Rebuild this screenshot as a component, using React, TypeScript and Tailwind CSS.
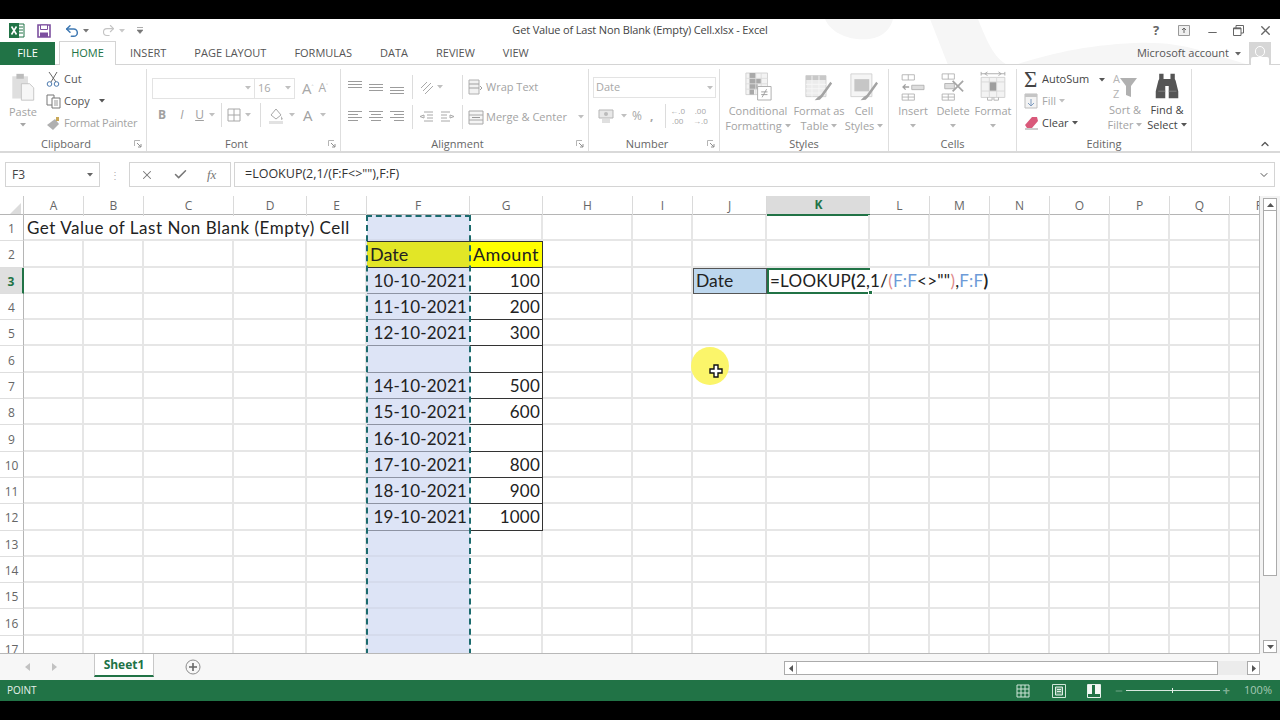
import React from "react";
import { ChevronDown, Undo2, Redo2, X, Check, Minus, ChevronUp } from "lucide-react";

const ui = "font-['Open_Sans','Noto_Sans',sans-serif]";
const cellFont = "font-['Lato','Carlito',sans-serif]";
const cols = ["A","B","C","D","E","F","G","H","I","J","K","L","M","N","O","P","Q","R"];

function Caret({ c = "#a6a6a6", className = "" }: { c?: string; className?: string }) {
  return <svg width="6" height="4" viewBox="0 0 6 4" className={className}><path d="M0 0h6L3 3.5z" fill={c} /></svg>;
}
function Lines({ kind, c = "#9c9c9c" }: { kind: "l" | "c" | "r" | "t" | "m" | "b"; c?: string }) {
  const y = kind === "t" ? [2, 5, 8] : kind === "m" ? [5, 8, 11] : kind === "b" ? [8, 11, 14] : [2, 5, 8, 11];
  return (
    <svg width="16" height="16" viewBox="0 0 16 16">
      {y.map((v, i) => {
        const short = i % 2 === 1 && kind.length === 1 && "lcr".includes(kind);
        const x1 = kind === "r" && short ? 5 : kind === "c" && short ? 3 : 1;
        const x2 = kind === "l" && short ? 11 : kind === "c" && short ? 13 : 15;
        return <path key={i} d={`M${x1} ${v + 0.5}H${x2}`} stroke={c} />;
      })}
    </svg>
  );
}
function Sep({ h = "h-[24px]" }: { h?: string }) {
  return <div className={`w-px ${h} bg-[#dcdcdc] shrink-0`} />;
}
function Launcher() {
  return (
    <svg width="8" height="8" viewBox="0 0 8 8" className="absolute right-[4px] bottom-[3px]">
      <path d="M0.5 6V0.5H6" fill="none" stroke="#b5b5b5" /><path d="M3 3l4 4M7 4v3H4" fill="none" stroke="#8f8f8f" />
    </svg>
  );
}
function Group({ w, label, launcher, children }: { w: string; label: string; launcher?: boolean; children: React.ReactNode }) {
  return (
    <div className={`${w} shrink-0 border-r border-[#dedede] flex flex-col relative mt-[4px] h-[82px]`}>
      <div className="flex-1 min-h-0">{children}</div>
      <div className={`h-[14px] text-center text-[11px] leading-[14px] text-[#666] ${launcher ? "pr-[14px]" : ""}`}>{label}</div>
      {launcher && <Launcher />}
    </div>
  );
}
function BigButton({ w, l1, l2, dark, children }: { w: string; l1: string; l2?: string; dark?: boolean; children: React.ReactNode }) {
  const c = dark ? "text-[#444]" : "text-[#a3a3a3]";
  return (
    <div className={`${w} shrink-0 flex flex-col items-center`}>
      <div className="h-[33px] flex items-center justify-center">{children}</div>
      <div className={`text-[11px] leading-[15px] whitespace-nowrap ${c}`}>{l1}</div>
      <div className={`text-[11px] leading-[15px] whitespace-nowrap ${c} flex items-center gap-[3px] h-[15px]`}>
        {l2}
        <Caret c={dark ? "#555" : "#b5b5b5"} />
      </div>
    </div>
  );
}

function CondIcon() {
  return (
    <svg width="27" height="29" viewBox="0 0 30 32">
      <path d="M1 1h24v24H1z" fill="#f3f3f3" stroke="#cfcfcf" />
      <path d="M5 1h7v6H5zM5 7h13v6H5zM5 13h9v6H5zM5 19h5v6H5z" fill="#a9a9a9" />
      <path d="M1 7h24M1 13h24M1 19h24M12 1v24M18 1v24" stroke="#dcdcdc" />
      <path d="M14 16h15v15H14z" fill="#fff" stroke="#a8a8a8" />
      <path d="M18 22h7M18 25h7M24 19l-5 9" stroke="#9a9a9a" />
    </svg>
  );
}
function TableIcon() {
  return (
    <svg width="28" height="28" viewBox="0 0 32 32">
      <path d="M1 3h23v24H1z" fill="#ececec" stroke="#cfcfcf" />
      <path d="M1 3h23v5H1z" fill="#c8c8c8" />
      <path d="M1 13h23M1 18h23M1 23h23M8 3v24M16 3v24" stroke="#f7f7f7" />
      <path d="M29 10 18 25l-3 2-4 4 6-.5 3-3L31 12z" fill="#a3a3a3" />
    </svg>
  );
}
function CellStyleIcon() {
  return (
    <svg width="28" height="28" viewBox="0 0 32 32">
      <path d="M1 1h24v26H1z" fill="#f5f5f5" stroke="#cfcfcf" />
      <path d="M5 7h17v14H5z" fill="#c6c6c6" />
      <path d="M30 10 19 25l-3 2-4 4 6-.5 3-3L32 12z" fill="#a3a3a3" />
    </svg>
  );
}
function InsertIcon({ del }: { del?: boolean }) {
  return (
    <svg width="25" height="28" viewBox="0 0 28 32">
      <path d={del ? "M1 1h14v6H1zM8 1v6" : "M1 2h14v6H1zM8 2v6"} fill="#fff" stroke="#b0b0b0" />
      <path d={del ? "M4 12h11v6H4z" : "M12 14h14v5H12z"} fill="#dedede" stroke="#b0b0b0" />
      {del ? <path d="M13 9l12 12M25 9 13 21" stroke="#a6a6a6" strokeWidth="2" /> : <path d="M2 16h7M5 13l-3 3 3 3" stroke="#a0a0a0" fill="none" strokeWidth="1.5" />}
      <path d="M1 24h14v7H1zM8 24v7M1 27.5h14" fill="#fff" stroke="#b0b0b0" />
    </svg>
  );
}
function FormatIcon() {
  return (
    <svg width="26" height="31" viewBox="0 0 28 34">
      <path d="M1 3h26M1 1v4M27 1v4M5 3l3-2M5 3l3 2M23 3l-3-2M23 3l-3 2" stroke="#a8a8a8" fill="none" />
      <path d="M1 7h26v22H1z" fill="#f3f3f3" stroke="#cfcfcf" />
      <path d="M10 12h8v10h-8z" fill="#9e9e9e" />
      <path d="M1 12h26M1 22h26M10 7v22M18 7v22" stroke="#d8d8d8" />
      <path d="M8 29v3h5v-3M15 29v3h5v-3" fill="none" stroke="#b0b0b0" />
    </svg>
  );
}

function Ribbon() {
  const dim = "text-[#a3a3a3]";
  return (
    <div className="h-[88px] shrink-0 bg-white border-b-2 border-[#d9d9d9] flex text-[11px]">
      <Group w="w-[147px]" label="Clipboard" launcher>
        <div className="flex">
          <div className="w-[46px] flex flex-col items-center pt-[4px]">
            <svg width="26" height="28" viewBox="0 0 28 34">
              <path d="M1 4h19v27H1z" fill="#dfdfdf" /><path d="M6 1h9v6H6z" fill="#bcbcbc" />
              <path d="M12 13h10l5 5v15H12z" fill="#f6f6f6" stroke="#bdbdbd" />
            </svg>
            <div className={`${dim} leading-[14px] mt-[4px]`}>Paste</div>
            <Caret className="mt-[4px]" />
          </div>
          <div className="flex flex-col">
            <div className="h-[21px] flex items-center gap-[3px] text-[#555]">
              <svg width="15" height="15" viewBox="0 0 15 15"><path d="M3 0l7 10M11 0 5 10" stroke="#666" fill="none" /><circle cx="3.5" cy="12" r="2.3" fill="none" stroke="#4a78ad" /><circle cx="10.5" cy="12" r="2.3" fill="none" stroke="#4a78ad" /></svg>
              Cut
            </div>
            <div className="h-[22px] flex items-center gap-[3px] text-[#555]">
              <svg width="15" height="15" viewBox="0 0 15 15"><path d="M1 1h7v10H1z" fill="#fff" stroke="#777" /><path d="M6 4h8v10H6z" fill="#fff" stroke="#777" /><path d="M8 7h4M8 9h4M8 11h4" stroke="#999" /></svg>
              Copy <Caret c="#555" className="ml-[6px]" />
            </div>
            <div className={`h-[22px] flex items-center gap-[3px] whitespace-nowrap tracking-[-0.25px] ${dim}`}>
              <svg width="15" height="15" viewBox="0 0 15 15"><path d="M1 9 9 3l4 5-6 6z" fill="#b0b0b0" /><path d="M10 1h3v4h-3z" fill="#c9a858" /></svg>
              Format Painter
            </div>
          </div>
        </div>
      </Group>

      <Group w="w-[194px]" label="Font" launcher>
        <div className="pl-[5px] pt-[8px]">
          <div className="flex items-center h-[22px]">
            <div className="w-[103px] h-[21px] border border-[#e3e3e3] flex items-center justify-end pr-[3px]"><Caret c="#c0c0c0" /></div>
            <div className="w-[40px] h-[21px] border border-[#e3e3e3] border-l-0 flex items-center justify-between px-[3px] text-[#a8a8a8]">16<Caret c="#c0c0c0" /></div>
            <span className="ml-[7px] text-[15px] leading-none text-[#a8a8a8]">A<sup className="text-[7px]">˄</sup></span>
            <span className="ml-[5px] text-[12px] leading-none text-[#a8a8a8]">A<sup className="text-[7px]">˅</sup></span>
          </div>
          <div className="flex items-center h-[22px] mt-[5px] text-[#a0a0a0] text-[12px]">
            <span className="w-[20px] text-center font-bold">B</span>
            <span className="w-[20px] text-center italic">I</span>
            <span className="w-[15px] text-center underline">U</span>
            <Caret c="#c0c0c0" className="ml-[2px] mr-[6px]" /><Sep />
            <svg width="14" height="14" viewBox="0 0 14 14" className="ml-[5px]"><path d="M1 1h12v12H1zM7 1v12M1 7h12" fill="none" stroke="#a8a8a8" /></svg>
            <Caret c="#c0c0c0" className="ml-[4px] mr-[9px]" /><Sep />
            <svg width="17" height="17" viewBox="0 0 17 17" className="ml-[7px]"><path d="M3 8l5-6 5 6-5 4z" fill="none" stroke="#a8a8a8" /><path d="M13 9l2 3-2 1z" fill="#b5b5b5" /><path d="M1 14h14v3H1z" fill="#e2e2e2" /></svg>
            <Caret c="#c0c0c0" className="ml-[4px] mr-[8px]" />
            <span className="text-[15px] leading-none">A</span>
            <Caret c="#c0c0c0" className="ml-[7px]" />
          </div>
        </div>
      </Group>

      <Group w="w-[248px]" label="Alignment" launcher>
        <div className="pl-[6px] pt-[4px]">
          <div className="flex items-center h-[28px]">
            <div className="flex gap-[5px] w-[65px]"><Lines kind="t" /><Lines kind="m" /><Lines kind="b" /></div>
            <Sep />
            <div className="w-[49px] flex items-center pl-[6px] gap-[3px]">
              <svg width="15" height="15" viewBox="0 0 15 15"><path d="M2 8 8 2M4 11l8-8M6 14l8-8" stroke="#a8a8a8" fill="none" /></svg><Caret c="#c0c0c0" />
            </div>
            <Sep />
            <div className={`flex items-center gap-[2px] pl-[5px] ${dim}`}>
              <svg width="16" height="16" viewBox="0 0 16 16"><path d="M1 1h10v14H1z" fill="#f2f2f2" stroke="#b0b0b0" /><path d="M1 5h10M1 9h10M12 7l2 2-2 2" stroke="#a0a0a0" fill="none" /></svg>
              Wrap Text
            </div>
          </div>
          <div className="flex items-center h-[28px] mt-[2px]">
            <div className="flex gap-[5px] w-[65px]"><Lines kind="l" /><Lines kind="c" /><Lines kind="r" /></div>
            <Sep />
            <div className="w-[49px] flex items-center pl-[6px] gap-[6px]">
              <svg width="15" height="13" viewBox="0 0 15 13"><path d="M5 1h9M8 4h6M8 7h6M5 10h9M5 4 1 5.5 5 7z" stroke="#a8a8a8" fill="none" /></svg>
              <svg width="15" height="13" viewBox="0 0 15 13"><path d="M1 1h9M1 4h6M1 7h6M1 10h9M10 4l4 1.5L10 7z" stroke="#a8a8a8" fill="none" /></svg>
            </div>
            <Sep />
            <div className={`flex items-center gap-[2px] pl-[5px] ${dim}`}>
              <svg width="16" height="15" viewBox="0 0 16 15"><path d="M1 1h14v13H1zM1 5h14M1 10h14" fill="#f5f5f5" stroke="#a8a8a8" /><path d="M4 7.5h8" stroke="#999" /></svg>
              Merge &amp; Center <Caret c="#c0c0c0" className="ml-[9px]" />
            </div>
          </div>
        </div>
      </Group>

      <Group w="w-[131px]" label="Number" launcher>
        <div className="pl-[4px] pt-[8px]">
          <div className="w-[123px] h-[21px] border border-[#e3e3e3] flex items-center justify-between px-[2px] text-[#a8a8a8]">Date<Caret c="#c0c0c0" /></div>
          <div className="flex items-center h-[24px] mt-[6px] text-[#a6a6a6] text-[12px]">
            <svg width="16" height="15" viewBox="0 0 16 15" className="ml-[5px]"><path d="M1 1h14v8H1z" fill="#e8e8e8" stroke="#b5b5b5" /><circle cx="8" cy="5" r="2" fill="#bbb" /><path d="M4 11h8M4 13h8" stroke="#c0c0c0" /></svg>
            <Caret c="#c0c0c0" className="ml-[7px]" />
            <span className="ml-[5px]">%</span>
            <span className="ml-[8px] font-bold">,</span>
            <Sep h="h-[24px] ml-[12px]" />
            <span className="ml-[4px] text-[8px] leading-[10px] text-center">←.0<br />.00</span>
            <span className="ml-[8px] text-[8px] leading-[10px] text-center">.00<br />→.0</span>
          </div>
        </div>
      </Group>

      <Group w="w-[169px]" label="Styles">
        <div className="flex pt-[1px] pl-[2px]">
          <BigButton w="w-[72px]" l1="Conditional" l2="Formatting"><CondIcon /></BigButton>
          <BigButton w="w-[50px]" l1="Format as" l2="Table"><TableIcon /></BigButton>
          <BigButton w="w-[40px]" l1="Cell" l2="Styles"><CellStyleIcon /></BigButton>
        </div>
      </Group>

      <Group w="w-[128px]" label="Cells">
        <div className="flex pt-[1px] pl-[4px]">
          <BigButton w="w-[40px]" l1="Insert"><InsertIcon /></BigButton>
          <BigButton w="w-[40px]" l1="Delete"><InsertIcon del /></BigButton>
          <BigButton w="w-[40px]" l1="Format"><FormatIcon /></BigButton>
        </div>
      </Group>

      <Group w="w-[175px]" label="Editing">
        <div className="flex">
          <div className="w-[90px] pl-[7px] shrink-0">
            <div className="h-[21px] flex items-center gap-[2px] text-[#444]">
              <span className="text-[23px] leading-none font-['Liberation_Serif',serif] text-[#444] w-[16px]">Σ</span>AutoSum <Caret c="#555" className="ml-[8px]" />
            </div>
            <div className="h-[22px] flex items-center gap-[3px] text-[#a6a6a6]">
              <svg width="15" height="16" viewBox="0 0 15 16"><path d="M1 1h12v14H1z" fill="#f3f3f3" stroke="#bdbdbd" /><path d="M1 1h12v3H1z" fill="#c5c5c5" /><path d="M7 6v7M4 10l3 3 3-3" stroke="#7e9cc0" fill="none" /></svg>
              Fill <Caret c="#c0c0c0" />
            </div>
            <div className="h-[22px] flex items-center gap-[3px] text-[#444]">
              <svg width="15" height="14" viewBox="0 0 15 14"><path d="M1 9 8 1h5l1 4-6 7H3z" fill="#d9597a" /><path d="M1 13h13" stroke="#999" /></svg>
              Clear <Caret c="#555" />
            </div>
          </div>
          <BigButton w="w-[36px]" l1="Sort &amp;" l2="Filter">
            <div className="flex items-center">
              <div className="flex flex-col text-[11px] leading-[15px] text-[#b5b5b5]"><span>A</span><span>Z</span></div>
              <svg width="17" height="20" viewBox="0 0 17 20" className="mt-[4px]"><path d="M0 0h17l-6 8v11l-5-2V8z" fill="#b0b0b0" /></svg>
            </div>
          </BigButton>
          <div className="w-[5px]" />
          <BigButton w="w-[38px]" l1="Find &amp;" l2="Select" dark>
            <svg width="28" height="26" viewBox="0 0 28 30">
              <path d="M5 1h5v6h8V1h5v6l1 2 3 12v8H16V15h-4v14H1v-8L4 9l1-2z" fill="#555" />
              <path d="M4 21h8M16 21h9" stroke="#888" />
            </svg>
          </BigButton>
        </div>
      </Group>
      <div className="flex-1 flex items-end justify-end pr-[9px] pb-[1px]">
        <ChevronUp size={12} strokeWidth={2.5} className="text-[#555]" />
      </div>
    </div>
  );
}

const widths = "grid grid-cols-[24px_60px_60px_90px_73px_60px_103px_73px_90px_60px_74px_103px_60px_60px_60px_60px_60px_60px_60px]";
const formula = (
  <span className="whitespace-nowrap text-[#222] text-[17px] tracking-[0.25px] pl-[1px] relative z-10">
    =LOOKUP<span className="font-bold">(</span>2,1/<span className="text-[#e08a8a]">(</span><span className="text-[#6d9bd8]">F:F</span>&lt;&gt;""<span className="text-[#e08a8a]">)</span>,<span className="text-[#6d9bd8]">F:F</span><span className="font-bold">)</span>
  </span>
);
const dates: Record<number, [string, string]> = {
  3: ["10-10-2021", "100"], 4: ["11-10-2021", "200"], 5: ["12-10-2021", "300"], 6: ["", ""],
  7: ["14-10-2021", "500"], 8: ["15-10-2021", "600"], 9: ["16-10-2021", ""], 10: ["17-10-2021", "800"],
  11: ["18-10-2021", "900"], 12: ["19-10-2021", "1000"],
};

function Row({ n }: { n: number }) {
  const bottom = "border-b-2 border-[#e6e6e6]";
  const base = `border-r-2 ${bottom}`;
  const active = n === 3;
  const data = dates[n];
  return (
    <div className={`${widths} grid-rows-[26.3px] w-[1289px] h-[26.3px] ${cellFont} text-[17px] leading-[22px] text-[#222]`}>
      <div className={`${active ? "bg-[#dfdfdf] text-[#217346] font-bold border-r-2 border-r-[#217346]" : "text-[#666] border-r border-r-[#b5b5b5]"} border-b border-b-[#dedede] flex items-center justify-center pt-[3px] text-[12px] ${ui}`}>{n}</div>
      {cols.map((c) => {
        if (c === "A" && n === 1)
          return <div key={c} className={`${bottom} flex items-center pl-[3px] pt-[2px] whitespace-nowrap tracking-[0.52px]`}>Get Value of Last Non Blank (Empty) Cell</div>;
        if (n === 1 && ["B", "C", "D", "E"].includes(c)) return <div key={c} className={bottom} />;
        if (c === "F") {
          if (n === 2) return <div key={c} className="bg-[#e2e626] border-y border-[#333] flex items-center pl-[3px] text-[18px]">Date</div>;
          if (data) return <div key={c} className="bg-[#dde4f6] border-b border-[#8d93a3] flex items-center justify-end pr-[3px] pt-[1px] tracking-[0.2px]">{data[0]}</div>;
          return <div key={c} className="bg-[#dde4f6] border-b-2 border-[#d5dbec]" />;
        }
        if (c === "G") {
          if (n === 2) return <div key={c} className="bg-[#ffff00] border border-l-0 border-[#333] flex items-center pl-[3px] text-[18px] tracking-[0.4px]">Amount</div>;
          if (data) return <div key={c} className="border-b border-r border-[#333] flex items-center justify-end pr-[2px] pt-[1px] tracking-[0.2px]">{data[1]}</div>;
        }
        if (active && c === "J") return <div key={c} className="bg-[#bdd7ee] border border-[#555] flex items-center pl-[2px] text-[17.5px]">Date</div>;
        if (active && c === "K")
          return (
            <div key={c} className="border-y-2 border-l-2 border-[#217346] flex items-center relative min-w-0">
              {formula}
              <span className="absolute right-[-3px] bottom-[-3px] w-[5px] h-[5px] bg-[#217346] border border-white" />
            </div>
          );
        if (active && (c === "L" || c === "M")) return <div key={c} className={bottom} />;
        return <div key={c} className={base} />;
      })}
    </div>
  );
}

function Sheet() {
  return (
    <div className="flex h-[458px] shrink-0 bg-white">
      <div className="w-[1260px] shrink-0 border-r border-b border-[#b8b8b8] overflow-hidden flex flex-col">
        <div className={`${widths} w-[1289px] h-[19px] shrink-0 border-b border-[#b5b5b5] text-[12px] text-[#666] ${ui}`}>
          <div className="border-r border-[#c8c8c8] flex items-end justify-end pr-[2px] pb-[2px]"><svg width="11" height="11" viewBox="0 0 11 11"><path d="M11 0v11H0z" fill="#dcdcdc" /></svg></div>
          {cols.map((c) =>
            c === "K" ? (
              <div key={c} className="bg-[#dcdcdc] border-b-2 border-[#217346] text-[#217346] font-bold flex items-center justify-center">{c}</div>
            ) : (
              <div key={c} className="border-r border-[#dadada] flex items-center justify-center">{c}</div>
            )
          )}
        </div>
        <div className="relative flex-1 min-h-0 overflow-hidden">
          {Array.from({ length: 17 }, (_, i) => <Row key={i} n={i + 1} />)}
          <div className="absolute left-[366px] top-0 w-[105px] h-[460px] border-2 border-b-0 border-dashed border-[#1c6b6e] pointer-events-none" />
          <div className="absolute left-[691px] top-[132px] w-[38px] h-[38px] rounded-full bg-[#fbf56a] flex items-center justify-center">
            <svg width="14" height="14" viewBox="0 0 14 14" className="ml-[12px] mt-[10px]"><path d="M5 1h4v4h4v4H9v4H5V9H1V5h4z" fill="#fff" stroke="#111" strokeWidth="1.4" /></svg>
          </div>
        </div>
      </div>
      <div className="w-[20px] shrink-0 flex flex-col items-center bg-[#f3f3f3] py-[2px]">
        <div className="w-[14px] h-[13px] bg-white border border-[#ababab] flex items-center justify-center"><svg width="7" height="4" viewBox="0 0 7 4"><path d="M3.5 0 7 4H0z" fill="#555" /></svg></div>
        <div className="w-[14px] h-[365px] bg-white border border-[#ababab] border-t-0" />
        <div className="flex-1" />
        <div className="w-[14px] h-[13px] bg-white border border-[#ababab] flex items-center justify-center mb-[-1px]"><svg width="7" height="4" viewBox="0 0 7 4"><path d="M0 0h7L3.5 4z" fill="#555" /></svg></div>
      </div>
    </div>
  );
}

function SheetBar() {
  return (
    <div className="h-[26px] shrink-0 flex bg-[#f7f7f7]">
      <div className="w-[94px] flex items-center pl-[25px] gap-[22px]">
        <svg width="5" height="8" viewBox="0 0 5 8"><path d="M5 0v8L0 4z" fill="#c2c2c2" /></svg>
        <svg width="5" height="8" viewBox="0 0 5 8"><path d="M0 0v8l5-4z" fill="#c2c2c2" /></svg>
      </div>
      <div className={`w-[60px] h-[23px] bg-white border-b-2 border-x border-[#217346] border-x-[#c8c8c8] text-[#217346] font-bold text-[12px] flex items-center justify-center ${ui}`}>Sheet1</div>
      <div className="w-[630px] flex items-center pl-[31px]">
        <svg width="16" height="16" viewBox="0 0 16 16" className="-mt-[1px]"><circle cx="8" cy="8" r="7" fill="none" stroke="#8c8c8c" /><path d="M8 4v8M4 8h8" stroke="#666" strokeWidth="1.6" /></svg>
      </div>
      <div className="flex items-center w-[476px] h-[14px] mt-[7px]">
        <div className="w-[13px] h-[14px] bg-white border border-[#ababab] flex items-center justify-center"><svg width="4" height="7" viewBox="0 0 4 7"><path d="M4 0v7L0 3.5z" fill="#555" /></svg></div>
        <div className="w-[421px] h-[14px] bg-white border border-l-0 border-[#ababab]" />
        <div className="flex-1 h-[14px] bg-[#ececec]" />
        <div className="w-[13px] h-[14px] bg-white border border-[#ababab] flex items-center justify-center"><svg width="4" height="7" viewBox="0 0 4 7"><path d="M0 0v7l4-3.5z" fill="#555" /></svg></div>
      </div>
    </div>
  );
}

function StatusBar() {
  return (
    <div className={`h-[21px] shrink-0 bg-[#217346] flex items-center text-[11px] text-[#e6f0ea] ${ui}`}>
      <span className="pl-[7px] text-[10px]">POINT</span>
      <div className="ml-auto flex items-center">
        <svg width="14" height="14" viewBox="0 0 14 14"><path d="M1 1h12v12H1zM5 1v12M9 1v12M1 5h12M1 9h12" fill="none" stroke="#cfe6d8" /></svg>
        <svg width="14" height="14" viewBox="0 0 14 14" className="ml-[22px]"><path d="M0.5 0.5h13v13H.5z" fill="none" stroke="#cfe6d8" /><path d="M3.5 3h7v8h-7z" fill="#5f9878" stroke="#e0efe6" /><path d="M5 5.5h4M5 7.5h4" stroke="#e0efe6" /></svg>
        <svg width="14" height="14" viewBox="0 0 14 14" className="ml-[21px]"><path d="M0.5 0.5h13v13H.5z" fill="#217346" stroke="#e6f0ea" /><path d="M1 1h4v9H1zM8 1h5v9H8z" fill="#f4f8f5" /></svg>
        <Minus size={10} className="ml-[13px] text-[#7fae93]" />
        <div className="w-[94px] h-px bg-[#d8e8df] ml-[2px] flex items-center justify-center"><div className="w-px h-[5px] bg-[#e6f0ea]" /></div>
        <span className="ml-[3px] text-[13px] leading-none font-bold text-[#7fae93]">+</span>
        <span className="ml-[14px] mr-[8px] text-[#a5c9b4]">100%</span>
      </div>
    </div>
  );
}

export default function App() {
  return (
    <div className={`w-[1280px] h-[720px] bg-black overflow-hidden pt-[19px] ${ui}`}>
      <div className="h-[682px] flex flex-col bg-white relative">
        <svg width="430" height="46" viewBox="0 0 430 46" className="absolute left-[820px] top-0">
          <path d="M5 0c6 14 24 22 44 20 16-2 22-12 24-20zM110 0l18 46h60c-14-6-22-26-30-46zM195 46c30-10 70-20 120-22s70 10 115 22z" fill="#f6f6f6" />
        </svg>
        <div className="h-[23px] shrink-0 flex items-center relative">
          <div className="flex items-center pl-[9px]">
            <svg width="16" height="15" viewBox="0 0 16 15"><path d="M6 1h9v13H6z" fill="#fff" stroke="#217346" /><path d="M9 4h5M9 7h5M9 10h5" stroke="#217346" /><path d="M0 0h10v15H0z" fill="#217346" /><path d="m2.5 3.5 5 8m0-8-5 8" stroke="#fff" strokeWidth="1.6" /></svg>
            <svg width="14" height="14" viewBox="0 0 14 14" className="ml-[12px]"><path d="M1 1h12v12H1z" fill="#fff" stroke="#7c4f9f" strokeWidth="1.6" /><path d="M3.5 1h7v4.5h-7z" fill="#fff" stroke="#7c4f9f" /><path d="M3 8.5h8V13H3z" fill="#7c4f9f" /></svg>
            <Undo2 size={16} strokeWidth={2.2} className="ml-[13px] text-[#3e78b2]" />
            <Caret c="#777" className="ml-[3px]" />
            <Redo2 size={15} strokeWidth={1.8} className="ml-[12px] text-[#c4c4c4]" />
            <Caret c="#c9c9c9" className="ml-[3px]" />
            <svg width="6" height="7" viewBox="0 0 6 7" className="ml-[12px]"><path d="M0 0.5h6M0 3h6l-3 3.5z" fill="#777" stroke="#777" strokeWidth=".6" /></svg>
          </div>
          <div className="absolute left-0 right-0 text-center text-[11px] text-[#444] tracking-[-0.15px]">Get Value of Last Non Blank (Empty) Cell.xlsx - Excel</div>
          <div className="ml-auto flex items-center text-[#666] relative">
            <span className="font-bold text-[13px] leading-none w-[14px] text-center">?</span>
            <svg width="12" height="11" viewBox="0 0 12 11" className="ml-[15px]"><path d="M.5.5h11v10H.5z" fill="#efefef" stroke="#999" /><path d="M6 3v5M4 5l2-2 2 2" stroke="#666" fill="none" /></svg>
            <Minus size={13} strokeWidth={2} className="ml-[16px] mt-[3px]" />
            <svg width="11" height="11" viewBox="0 0 11 11" className="ml-[14px]"><path d="M3 3V.5h7.5V8H8M.5 3h7.5v7.5H.5z" fill="none" stroke="#666" /><path d="M.5 3.5h7.5" stroke="#666" strokeWidth="1.5" /></svg>
            <X size={15} strokeWidth={2.2} className="ml-[14px] mr-[7px]" />
          </div>
        </div>

        <div className="h-[23px] shrink-0 flex items-end text-[11px] text-[#555] relative">
          <div className="w-full absolute left-0 bottom-0 h-px bg-[#d4d4d4]" />
          <div className="w-[55px] h-[23px] bg-[#217346] text-white flex items-center justify-center relative">FILE</div>
          <div className="ml-[4px] w-[57px] h-[24px] bg-white border border-b-0 border-[#d4d4d4] text-[#217346] flex items-center justify-center relative">HOME</div>
          {["INSERT", "PAGE LAYOUT", "FORMULAS", "DATA", "REVIEW", "VIEW"].map((t) => (
            <div key={t} className="h-[23px] px-[14px] flex items-center whitespace-nowrap relative">{t}</div>
          ))}
          <div className="ml-auto flex items-center h-[23px] text-[11px] text-[#555] relative">
            Microsoft account <Caret c="#666" className="ml-[6px]" />
            <div className="ml-[8px] mr-[9px] w-[22px] h-[23px] bg-[#d6d6d6] flex flex-col items-center justify-end overflow-hidden">
              <div className="w-[10px] h-[11px] rounded-full border border-[#fff] bg-[#d6d6d6]" />
              <div className="w-[18px] h-[8px] bg-white rounded-t-[2px]" />
            </div>
          </div>
        </div>

        <Ribbon />

        <div className="h-[43px] shrink-0 bg-white flex items-start pt-[9px] pb-[9px]">
          <div className="ml-[5px] w-[95px] h-[25px] border border-[#d4d4d4] flex items-center justify-between px-[6px] text-[12px] text-[#444]">
            F3<Caret c="#666" />
          </div>
          <div className="w-[29px] h-[25px] flex items-center justify-center text-[#b0b0b0] text-[10px] leading-none">⋮</div>
          <div className="w-[102px] h-[25px] border border-[#d4d4d4] flex items-center pl-[10px] text-[#777]">
            <X size={14} strokeWidth={1.8} />
            <Check size={15} strokeWidth={2.4} className="ml-[19px]" />
            <span className="ml-[19px] font-['Liberation_Serif',serif] italic text-[13px] leading-none">fx</span>
          </div>
          <div className="ml-[3px] w-[1041px] h-[25px] border border-[#d4d4d4] flex items-center justify-between pl-[10px] pr-[4px] text-[12.5px] text-[#333]">
            =LOOKUP(2,1/(F:F&lt;&gt;""),F:F)
            <ChevronDown size={12} className="text-[#555]" />
          </div>
        </div>

        <Sheet />
        <SheetBar />
        <StatusBar />
      </div>
    </div>
  );
}
